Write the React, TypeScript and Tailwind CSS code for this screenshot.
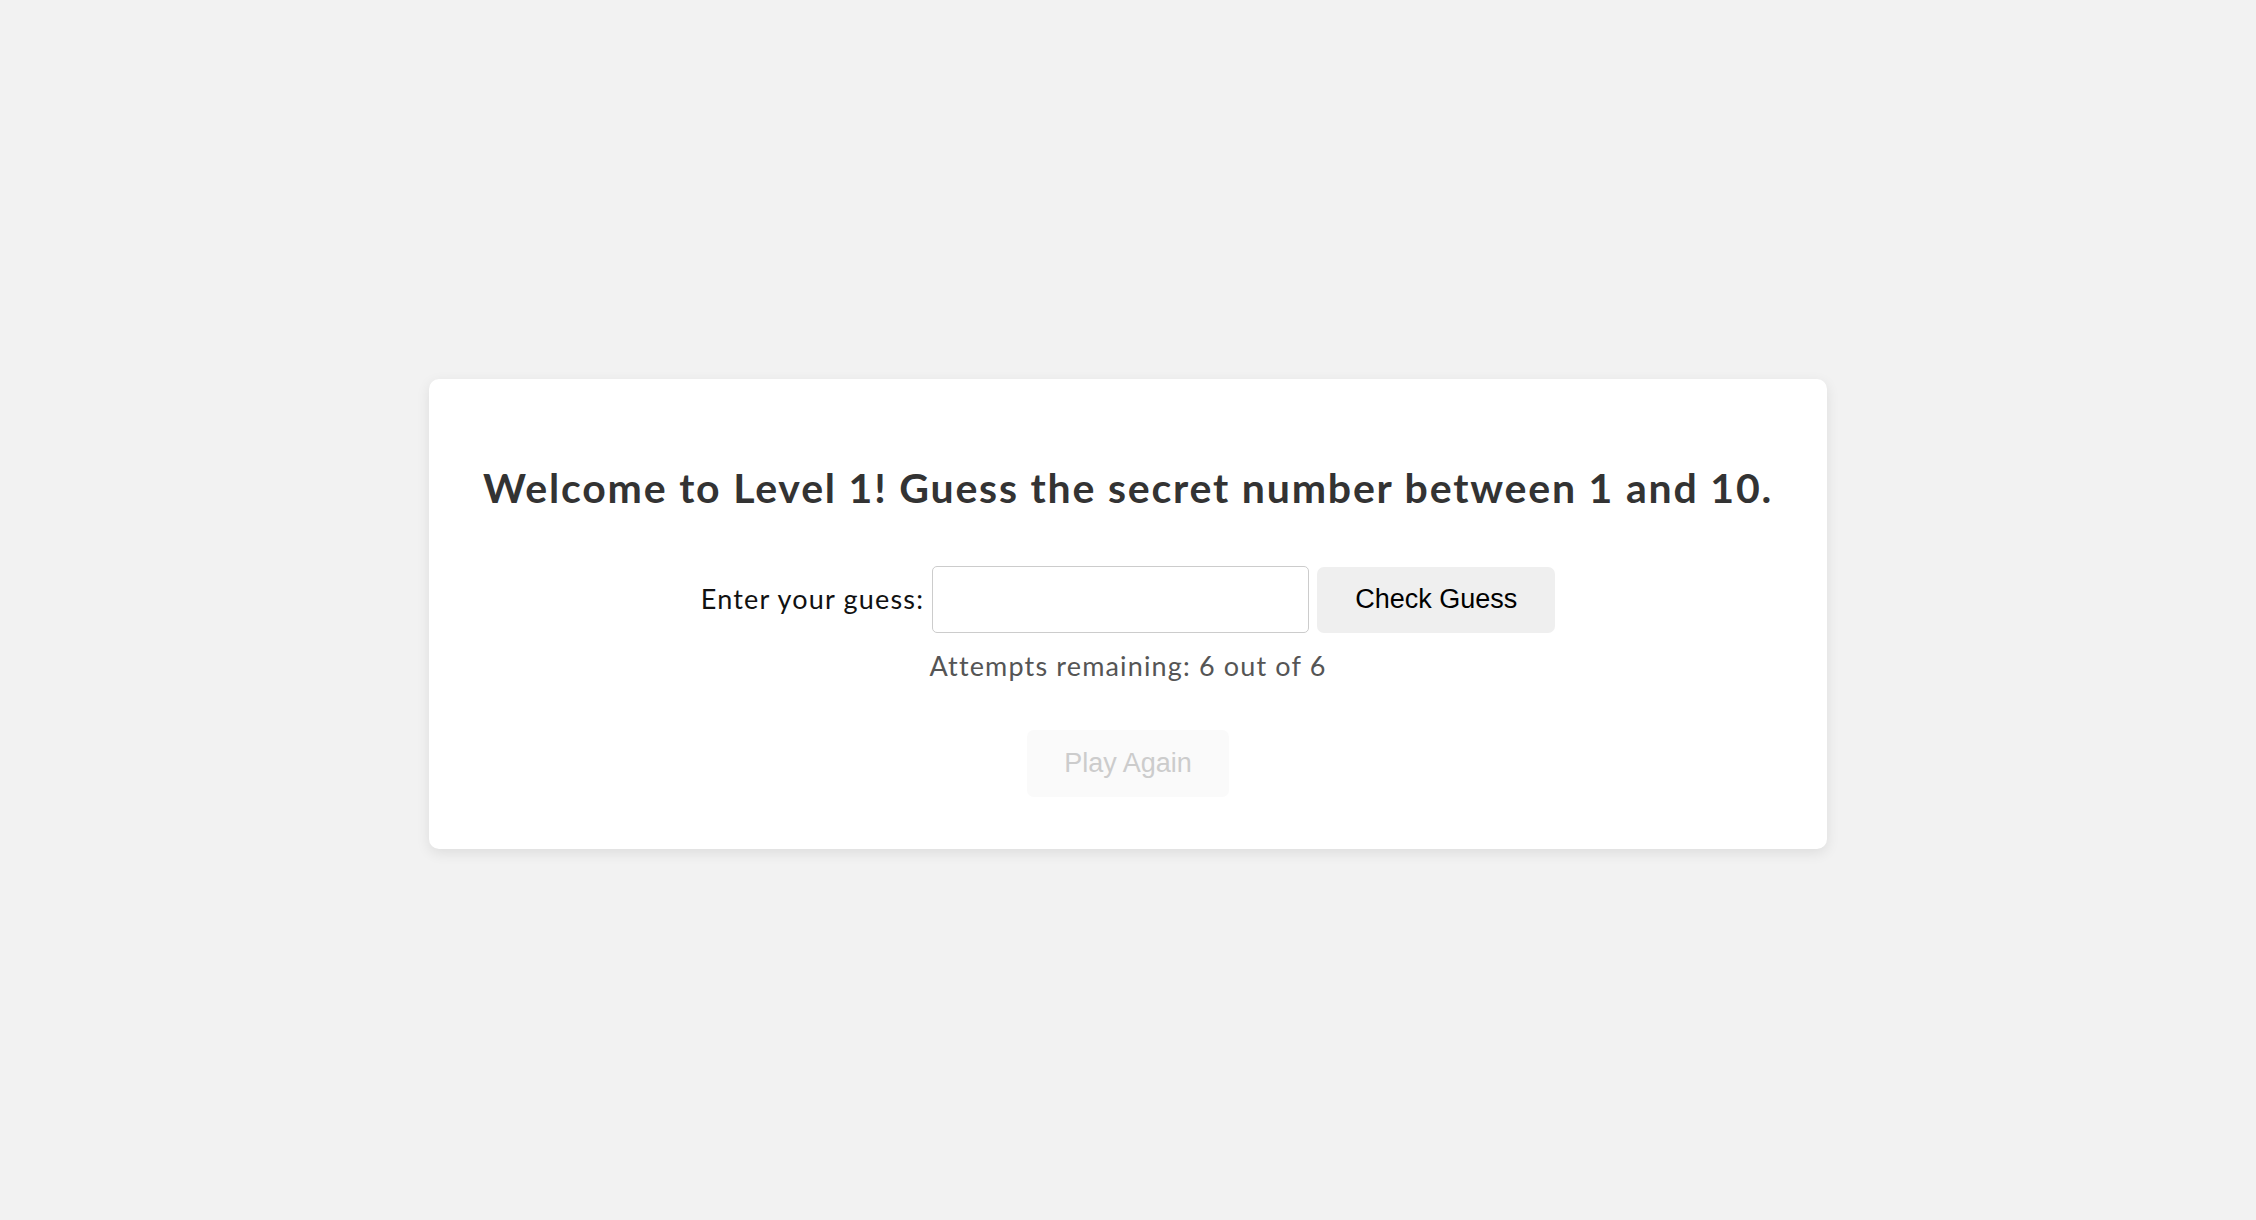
import { useState } from 'react'

const MAX_ATTEMPTS = 6

export default function App() {
  const [guess, setGuess] = useState('')
  const [attempts] = useState(MAX_ATTEMPTS)

  return (
    <div className="min-h-screen flex items-center justify-center bg-[#f2f2f2] pt-2 font-['Lato',sans-serif]">
      <div className="w-[1398px] bg-white rounded-[10px] shadow-[0_4px_14px_rgba(0,0,0,0.09)] flex flex-col items-center pt-[84px] pb-[52px]">
        <h1 className="text-[41px] leading-[49px] font-bold tracking-[1.8px] text-[#333]">
          Welcome to Level 1! Guess the secret number between 1 and 10.
        </h1>

        <div className="mt-[54px] flex items-center">
          <label htmlFor="guess" className="text-[27px] tracking-[1.2px] text-[#111] mr-[8px]">
            Enter your guess:
          </label>
          <input
            id="guess"
            type="number"
            value={guess}
            onChange={(e) => setGuess(e.target.value)}
            className="w-[377px] h-[67px] border border-[#cccccc] rounded-[5px] px-3 text-[27px] outline-none"
          />
          <button className="ml-[8px] w-[238px] h-[66px] rounded-[7px] bg-[#efefef] text-black text-[27px] font-['Liberation_Sans',Arial,sans-serif]">
            Check Guess
          </button>
        </div>

        <p className="mt-[17px] text-[27px] leading-[32px] tracking-[1.15px] text-[#555]">
          Attempts remaining: {attempts} out of {MAX_ATTEMPTS}
        </p>

        <button
          disabled
          className="mt-[48px] w-[202px] h-[67px] rounded-[7px] bg-[#fafafa] text-[#cccccc] text-[27px] font-['Liberation_Sans',Arial,sans-serif]"
        >
          Play Again
        </button>
      </div>
    </div>
  )
}
